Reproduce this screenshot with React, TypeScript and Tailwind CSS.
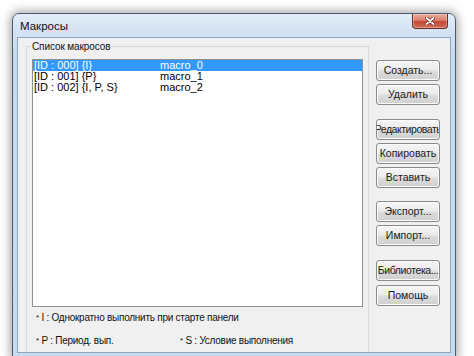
import React from "react";

const font = { fontFamily: '"Liberation Sans", Arial, sans-serif' };

function WinButton({ label, className = "" }: { label: string; className?: string }) {
  return (
    <div
      className={`flex h-[21px] w-[64px] items-center justify-center overflow-hidden whitespace-nowrap rounded-[3px] border border-[#8a8a8a] bg-[linear-gradient(to_bottom,#f6f6f6_0%,#ebebeb_48%,#dcdcdc_52%,#d0d0d0_100%)] text-[10.5px] leading-none text-[#1a1a1a] shadow-[inset_0_0_0_1px_#fcfcfc] ${className}`}
    >
      {label}
    </div>
  );
}

export default function App() {
  const rows = [
    { id: "[ID : 000] {I}", name: "macro_0", sel: true },
    { id: "[ID : 001] {P}", name: "macro_1", sel: false },
    { id: "[ID : 002] {I, P, S}", name: "macro_2", sel: false },
  ];
  return (
    <div className="h-[356px] w-[474px] overflow-hidden bg-white pl-[12px] pt-[13px]" style={font}>
      <div className="relative flex h-[345px] w-[444px] flex-col rounded-t-[7px] border border-[#4a5c72] bg-[linear-gradient(to_bottom,#e4eef9_0px,#d5e4f4_14px,#c6daef_40px,#c8dcf1_100%)] shadow-[0_0_10px_2px_rgba(0,0,0,0.35)]">
        {/* title bar */}
        <div className="flex h-[23px] items-start justify-between pl-[7px] pr-[7px]">
          <span className="pt-[7px] text-[11.5px] leading-none text-[#111]">Макросы</span>
          <div className="flex h-[15px] w-[36px] items-center justify-center rounded-b-[4px] border border-t-0 border-[#6b2a20] bg-[linear-gradient(to_bottom,#e9ad9c_0%,#d9806a_45%,#c2472f_55%,#cf6e58_100%)] shadow-[inset_0_0_0_1px_rgba(255,220,210,0.45)]">
            <svg width="10" height="8" viewBox="0 0 10 8">
              <path d="M1.5 1 L8.5 7 M8.5 1 L1.5 7" stroke="#6a2a22" strokeWidth="3.2" strokeLinecap="round" />
              <path d="M1.5 1 L8.5 7 M8.5 1 L1.5 7" stroke="#ffffff" strokeWidth="1.7" strokeLinecap="round" />
            </svg>
          </div>
        </div>
        {/* client */}
        <div className="mx-[4px] h-[316px] overflow-hidden border border-[#8fa6c0] bg-[#f0f0f0]">
          <div className="flex pl-[8px] pt-[8px]">
            {/* group box */}
            <div className="relative h-[330px] w-[343px] border border-[#d5d9dd] pl-[5px] pt-[12px]">
              <span className="absolute left-[3px] top-[-7px] bg-[#f0f0f0] px-[2px] text-[10px] leading-[13px] tracking-[-0.1px] text-[#111]">
                Список макросов
              </span>
              <div className="h-[248px] w-[331px] border border-[#8e9297] bg-white">
                {rows.map((r) => (
                  <div
                    key={r.id}
                    className={`flex h-[11px] items-center text-[11px] leading-none ${r.sel ? "bg-[#3399ff] text-white" : "text-black"}`}
                  >
                    <span className="w-[127px] pl-[1px]">{r.id}</span>
                    <span>{r.name}</span>
                  </div>
                ))}
              </div>
              <div className="pl-[4px] pt-[4px] text-[10px] leading-[13px] tracking-[-0.25px] text-[#111]">
                <div>
                  <span className="align-top text-[8px]">*</span> I : Однократно выполнить при старте панели
                </div>
                <div className="mt-[10px] flex">
                  <span className="w-[144px]">
                    <span className="align-top text-[8px]">*</span> P : Период. вып.
                  </span>
                  <span>
                    <span className="align-top text-[8px]">*</span> S : Условие выполнения
                  </span>
                </div>
              </div>
            </div>
            {/* buttons */}
            <div className="ml-[7px] flex flex-col pt-[14px]">
              <WinButton label="Создать..." />
              <WinButton label="Удалить" className="mt-[3px]" />
              <WinButton label="Редактировать" className="mt-[14px] tracking-[-0.45px]" />
              <WinButton label="Копировать" className="mt-[3px]" />
              <WinButton label="Вставить" className="mt-[3px]" />
              <WinButton label="Экспорт..." className="mt-[13px]" />
              <WinButton label="Импорт..." className="mt-[3px]" />
              <WinButton label="Библиотека..." className="mt-[14px] tracking-[-0.4px]" />
              <WinButton label="Помощь" className="mt-[4px]" />
            </div>
          </div>
        </div>
      </div>
    </div>
  );
}
